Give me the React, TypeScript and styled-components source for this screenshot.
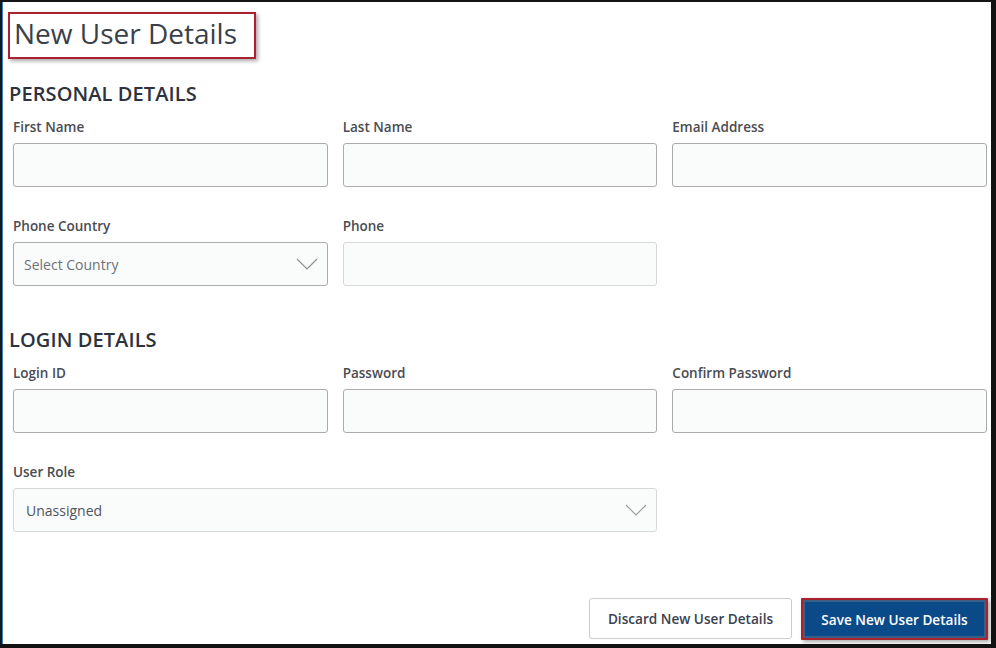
import React from 'react';
import styled, { createGlobalStyle } from 'styled-components';

const GlobalStyle = createGlobalStyle`
  html, body {
    margin: 0;
    padding: 0;
    background: #ffffff;
  }
  body {
    font-family: 'Open Sans', 'Noto Sans', Arial, sans-serif;
    color: #333a44;
  }
  * {
    box-sizing: border-box;
  }
`;

const Frame = styled.div`
  width: 996px;
  height: 648px;
  display: flex;
  flex-direction: column;
  background: #ffffff;
  border-top: 2px solid #151515;
  border-left: 2px solid #101820;
  border-right: 5px solid #121212;
  border-bottom: 4px solid #121212;
  box-shadow: inset 1px 0 0 #3f7fc0;
  overflow: hidden;
`;

const TitleBox = styled.div`
  align-self: flex-start;
  margin: 10px 0 0 6px;
  height: 47px;
  padding: 0 17px 5px 4px;
  border: 2px solid #a8232f;
  box-shadow: 2px 2px 4px rgba(0, 0, 0, 0.35);
  display: flex;
  align-items: center;
`;

const Title = styled.h1`
  margin: 0;
  font-size: 28px;
  font-weight: 400;
  color: #3a3f4a;
  line-height: 1;
`;

const SectionHeading = styled.h2<{ top: number }>`
  margin: ${p => p.top}px 0 0 7px;
  font-size: 20px;
  font-weight: 600;
  line-height: 24px;
  color: #2d323c;
  letter-spacing: 0.1px;
`;

const FieldGrid = styled.div`
  display: grid;
  grid-template-columns: repeat(3, 1fr);
  column-gap: 15px;
  row-gap: 30px;
  padding: 0 4px 0 11px;
  margin-top: 12px;
`;

const Field = styled.div<{ span?: number }>`
  display: flex;
  flex-direction: column;
  grid-column: span ${p => p.span ?? 1};
`;

const Label = styled.label`
  font-size: 13.5px;
  font-weight: 600;
  color: #4a4c52;
  line-height: 18px;
  margin-bottom: 7px;
`;

const Input = styled.div<{ muted?: boolean }>`
  height: 44px;
  border: 1px solid ${p => (p.muted ? '#d6d8da' : '#a9abae')};
  border-radius: 3px;
  background: #fafbfb;
`;

const Select = styled.div<{ muted?: boolean; indent: number }>`
  height: 44px;
  border: 1px solid ${p => (p.muted ? '#d6d8da' : '#a9abae')};
  border-radius: 3px;
  background: #fafbfb;
  display: flex;
  align-items: center;
  justify-content: space-between;
  padding: 0 9px 0 ${p => p.indent}px;
  font-size: 14px;
  color: ${p => (p.muted ? '#4f545c' : '#6e7379')};
`;

const Chevron = styled.svg`
  width: 22px;
  height: 12px;
  flex-shrink: 0;
`;

const Footer = styled.div`
  margin-top: auto;
  display: flex;
  justify-content: flex-end;
  align-items: flex-start;
  gap: 9px;
  padding: 0 3px 4px 0;
`;

const SecondaryButton = styled.button`
  width: 203px;
  height: 41px;
  margin: 0;
  background: #ffffff;
  border: 1px solid #c9cbce;
  border-radius: 3px;
  font-family: inherit;
  font-size: 13.6px;
  font-weight: 600;
  color: #3a4150;
  cursor: pointer;
`;

const PrimaryButton = styled.button`
  width: 187px;
  height: 42px;
  margin: 0;
  background: #0b4a88;
  border: 2px solid #a8232f;
  border-radius: 1px;
  box-shadow: 2px 2px 4px rgba(0, 0, 0, 0.35), inset 0 0 0 2px #3a5f86;
  font-family: inherit;
  font-size: 13.6px;
  font-weight: 600;
  color: #ffffff;
  cursor: pointer;
`;

const ChevronIcon: React.FC<{ color: string }> = ({ color }) => (
  <Chevron viewBox="0 0 22 12">
    <path d="M1 1 L11 11 L21 1" fill="none" stroke={color} strokeWidth="1.2" />
  </Chevron>
);

export default function App() {
  return (
    <>
      <GlobalStyle />
      <Frame>
        <TitleBox>
          <Title>New User Details</Title>
        </TitleBox>

        <SectionHeading top={23}>PERSONAL DETAILS</SectionHeading>
        <FieldGrid>
          <Field>
            <Label>First Name</Label>
            <Input />
          </Field>
          <Field>
            <Label>Last Name</Label>
            <Input />
          </Field>
          <Field>
            <Label>Email Address</Label>
            <Input />
          </Field>
          <Field>
            <Label>Phone Country</Label>
            <Select indent={10}>
              Select Country
              <ChevronIcon color="#8d9196" />
            </Select>
          </Field>
          <Field>
            <Label>Phone</Label>
            <Input muted />
          </Field>
        </FieldGrid>

        <SectionHeading top={42}>LOGIN DETAILS</SectionHeading>
        <FieldGrid>
          <Field>
            <Label>Login ID</Label>
            <Input />
          </Field>
          <Field>
            <Label>Password</Label>
            <Input />
          </Field>
          <Field>
            <Label>Confirm Password</Label>
            <Input />
          </Field>
          <Field span={2}>
            <Label>User Role</Label>
            <Select muted indent={12}>
              Unassigned
              <ChevronIcon color="#9a9ea3" />
            </Select>
          </Field>
        </FieldGrid>

        <Footer>
          <SecondaryButton>Discard New User Details</SecondaryButton>
          <PrimaryButton>Save New User Details</PrimaryButton>
        </Footer>
      </Frame>
    </>
  );
}
